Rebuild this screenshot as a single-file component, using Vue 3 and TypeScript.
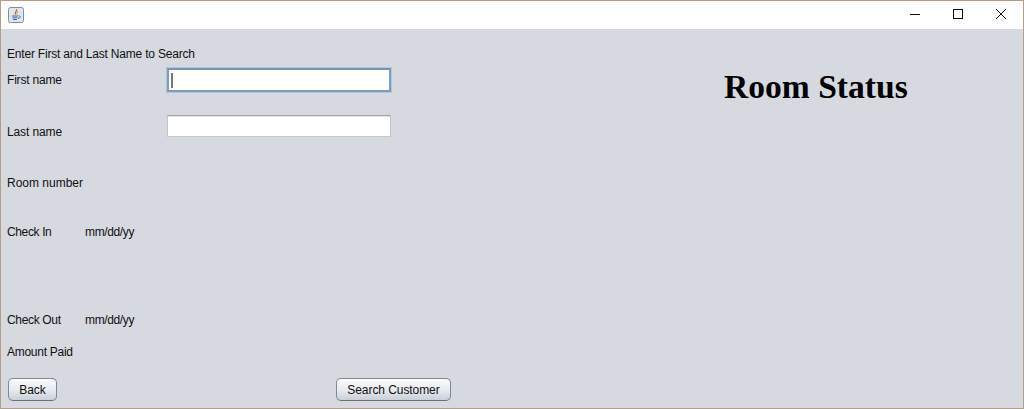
<script setup lang="ts">
interface Row {
  label: string
  cls: string
  hint?: string
}
const rows: Row[] = [
  { label: 'Room number', cls: 'r-room' },
  { label: 'Check In', cls: 'r-in', hint: 'mm/dd/yy' },
  { label: 'Check Out', cls: 'r-out', hint: 'mm/dd/yy' },
  { label: 'Amount Paid', cls: 'r-paid' },
]
</script>

<template>
  <div class="window">
    <header class="titlebar">
      <svg class="app-icon" width="16" height="16" viewBox="0 0 16 16">
        <rect x="0.5" y="0.5" width="15" height="15" rx="2" fill="#dfe6ee" stroke="#7f8c9c" />
        <path d="M8.5 2 C9.5 4 6.5 5 7.5 7.5 C6 5.5 9 4.5 8.5 2Z" fill="#d9541e" stroke="#d9541e" stroke-width="0.8" />
        <path d="M10 4 C9 5.5 8.5 6 9 7.5" fill="none" stroke="#e0801e" stroke-width="0.9" />
        <path d="M4 9 H10 M4.5 10.8 H9.5 M5 12.5 H9" stroke="#3f6fa8" stroke-width="1" />
        <path d="M10.5 8.8 C13 8.6 13 11 10 11.4" fill="none" stroke="#3f6fa8" stroke-width="0.9" />
      </svg>
      <div class="controls">
        <svg class="ctl" width="12" height="12" viewBox="0 0 12 12"><path d="M1 6.5 H11" stroke="#111" stroke-width="1" /></svg>
        <svg class="ctl" width="12" height="12" viewBox="0 0 12 12"><rect x="1.5" y="1.5" width="9" height="9" fill="none" stroke="#111" stroke-width="1" /></svg>
        <svg class="ctl" width="12" height="12" viewBox="0 0 12 12"><path d="M1 1 L11 11 M11 1 L1 11" stroke="#111" stroke-width="1" /></svg>
      </div>
    </header>

    <main class="panel">
      <section class="form">
        <div class="intro">Enter First and Last Name to Search</div>
        <div class="row r-first">
          <label class="lbl">First name</label>
          <div class="field focused"><span class="caret"></span></div>
        </div>
        <div class="row r-last">
          <label class="lbl">Last name</label>
          <div class="field"></div>
        </div>
        <div v-for="r in rows" :key="r.label" class="row" :class="r.cls">
          <label class="lbl short">{{ r.label }}</label>
          <span v-if="r.hint" class="hint">{{ r.hint }}</span>
        </div>
        <div class="actions">
          <button class="btn back">Back</button>
          <button class="btn search">Search Customer</button>
        </div>
      </section>
      <h1 class="status">Room Status</h1>
    </main>
  </div>
</template>

<style scoped>
.window {
  width: 1024px;
  height: 409px;
  box-sizing: border-box;
  border: 1px solid #b59f83;
  display: flex;
  flex-direction: column;
  background: #d6d9df;
  font-family: "Liberation Sans", Arial, sans-serif;
  font-size: 12px;
  color: #111;
  overflow: hidden;
}
.titlebar {
  height: 28px;
  flex: none;
  background: #fff;
  display: flex;
  align-items: center;
  justify-content: space-between;
  padding: 0 0 0 7px;
}
.controls {
  display: flex;
  gap: 31px;
  padding-right: 16px;
  padding-bottom: 2px;
}
.ctl { display: block; }
.panel {
  flex: 1;
  display: flex;
  min-height: 0;
}
.form {
  width: 470px;
  padding-left: 6px;
  box-sizing: border-box;
}
.intro {
  height: 18px;
  line-height: 18px;
  margin-top: 16px;
  letter-spacing: -0.2px;
}
.row {
  display: flex;
  height: 18px;
  line-height: 18px;
}
.lbl { width: 160px; flex: none; }
.lbl.short { width: 78px; }
.hint { letter-spacing: -0.37px; }
.r-first { height: 24px; line-height: 24px; margin-top: 5px; letter-spacing: -0.2px; }
.r-last { height: 34px; margin-top: 23px; line-height: 35px; letter-spacing: -0.12px; }
.r-room { margin-top: 25px; }
.r-in { margin-top: 31px; }
.r-in .lbl { letter-spacing: -0.37px; }
.r-out { margin-top: 70px; }
.r-out .lbl { letter-spacing: -0.33px; }
.r-paid { margin-top: 14px; letter-spacing: -0.27px; }
.field {
  width: 224px;
  height: 22px;
  box-sizing: border-box;
  background: #fff;
  border: 1px solid #c4c6cb;
  border-top-color: #a4a5a9;
  box-shadow: inset 0 1px 0 #e4e4e6;
  position: relative;
}
.field.focused {
  height: 24px;
  border: 2px solid #7f9db9;
  border-top-color: #7d93ad;
  box-shadow: 0 0 0 1px #aec6e0;
}
.caret {
  position: absolute;
  left: 2px;
  top: 3px;
  width: 2px;
  height: 15px;
  background: #77787a;
}
.actions {
  display: flex;
  margin-top: 17px;
  padding-left: 1px;
}
.btn {
  height: 23px;
  padding: 0;
  font: inherit;
  color: #111;
  border: 1px solid #7c8895;
  border-bottom-color: #68727e;
  border-radius: 5px;
  background: linear-gradient(#fbfcfd, #e6e9ee 55%, #c9cfd8);
}
.back { width: 49px; }
.search { width: 115px; margin-left: 279px; letter-spacing: -0.07px; }
.status {
  margin: 40px 0 0 253px;
  font-family: "Liberation Serif", "Times New Roman", serif;
  font-size: 33.6px;
  line-height: 36px;
  font-weight: 700;
  color: #000;
  white-space: nowrap;
}
</style>
